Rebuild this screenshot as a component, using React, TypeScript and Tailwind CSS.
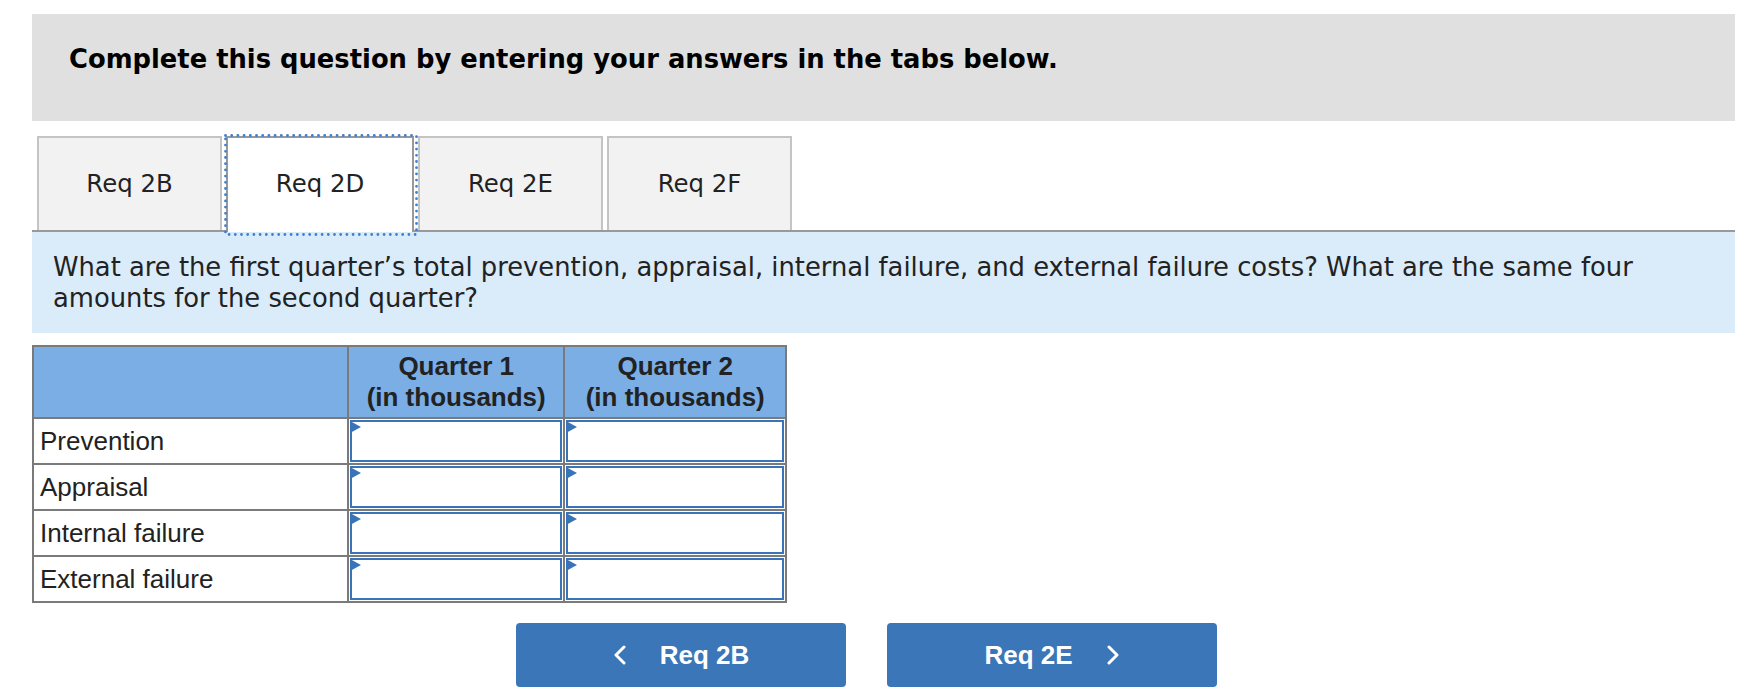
import React from 'react';

const tabs = ['Req 2B', 'Req 2D', 'Req 2E', 'Req 2F'];
const rows = ['Prevention', 'Appraisal', 'Internal failure', 'External failure'];

function Chevron({ dir }: { dir: 'left' | 'right' }) {
  return (
    <svg width="14" height="20" viewBox="0 0 14 20" className="shrink-0">
      <path
        d={dir === 'left' ? 'M11 2 L3 10 L11 18' : 'M3 2 L11 10 L3 18'}
        fill="none"
        stroke="white"
        strokeWidth="3"
        strokeLinecap="round"
        strokeLinejoin="round"
      />
    </svg>
  );
}

function AnswerCell() {
  return (
    <td className="border-2 border-[#7a7a7a] p-[1px] h-[46px]">
      <div className="relative h-[42px] border-2 border-[#3a74b8] bg-white">
        {/* little marker on each input */}
        <span className="absolute left-[-2px] top-[-1px] w-0 h-0 border-y-[6px] border-y-transparent border-l-[11px] border-l-[#3a74b8]" />
      </div>
    </td>
  );
}

// dotted focus ring drawn over the active tab
function FocusRing() {
  return (
    <svg className="absolute left-[-4px] top-[-4px] w-[194px] h-[102px] pointer-events-none overflow-visible">
      <rect
        x="1.5"
        y="1.5"
        width="191"
        height="99"
        fill="none"
        stroke="#3d7fd1"
        strokeWidth="2.8"
        strokeDasharray="0 6.2"
        strokeLinecap="round"
      />
    </svg>
  );
}

export default function App() {
  return (
    <div className="min-h-screen bg-white pt-[14px] pl-[32px] pr-[13px] text-[#222]">
      {/* Instruction banner */}
      <div className="h-[107px] bg-[#e0e0e0] pl-[37px] pt-[30px]">
        <p className="font-['DejaVu_Sans',sans-serif] font-bold text-[25.8px] leading-[30px] text-black">
          Complete this question by entering your answers in the tabs below.
        </p>
      </div>

      {/* Tabs */}
      <div className="mt-[15px] flex gap-[4px] pl-[5px] border-b-2 border-[#999]">
        {tabs.map((t) => {
          const active = t === 'Req 2D';
          return (
            <div
              key={t}
              className={
                active
                  ? 'relative w-[188px] h-[96px] -mb-[2px] flex items-center justify-center bg-white border-2 border-b-0 border-[#999] font-["DejaVu_Sans",sans-serif] text-[24.4px] pb-[2px]'
                  : 'w-[185px] h-[94px] flex items-center justify-center bg-[#f2f2f2] border-2 border-b-0 border-[#c4c4c4] font-["DejaVu_Sans",sans-serif] text-[24.4px]'
              }
            >
              {t}
              {active && <FocusRing />}
            </div>
          );
        })}
      </div>

      {/* Question */}
      <div className="bg-[#daebf9] pl-[21px] pr-[40px] pt-[20px] pb-[19px] font-['DejaVu_Sans',sans-serif] text-[25.8px] leading-[31px]">
        What are the first quarter’s total prevention, appraisal, internal failure, and external failure costs? What are the same four amounts for the second quarter?
      </div>

      {/* Answer table */}
      <table className="mt-[12px] border-collapse w-[755px] font-['Liberation_Sans',Arial,sans-serif] text-[26px]">
        <thead>
          <tr className="bg-[#7aaee5]">
            <th className="w-[316px] h-[72px] border-2 border-[#7a7a7a]" />
            <th className="w-[217px] border-2 border-[#7a7a7a] font-bold leading-[31px] text-[#222]">
              Quarter 1<br />(in thousands)
            </th>
            <th className="w-[222px] border-2 border-[#7a7a7a] font-bold leading-[31px] text-[#222]">
              Quarter 2<br />(in thousands)
            </th>
          </tr>
        </thead>
        <tbody>
          {rows.map((r) => (
            <tr key={r}>
              <td className="border-2 border-[#7a7a7a] pl-[6px] h-[46px] leading-[30px]">{r}</td>
              <AnswerCell />
              <AnswerCell />
            </tr>
          ))}
        </tbody>
      </table>

      {/* Navigation */}
      <div className="mt-[20px] pl-[484px] flex gap-[41px] font-['Liberation_Sans',Arial,sans-serif] font-bold text-[26px] text-white">
        <button className="w-[330px] h-[64px] rounded-[4px] bg-[#3a76b8] flex items-center justify-center gap-[33px]">
          <Chevron dir="left" />
          <span>Req 2B</span>
        </button>
        <button className="w-[330px] h-[64px] rounded-[4px] bg-[#3a76b8] flex items-center justify-center gap-[33px]">
          <span>Req 2E</span>
          <Chevron dir="right" />
        </button>
      </div>
    </div>
  );
}
